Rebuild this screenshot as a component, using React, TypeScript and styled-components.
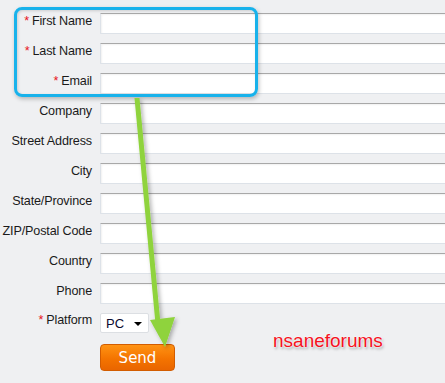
import React from "react";
import styled, { createGlobalStyle } from "styled-components";

const Global = createGlobalStyle`
  html, body { margin: 0; padding: 0; background: #eff0f2; overflow: hidden; }
  body { font-family: "Liberation Sans", Arial, sans-serif; }
`;

const Page = styled.div`
  position: relative;
  width: 445px;
  height: 383px;
  overflow: hidden;
  padding-top: 13px;
  box-sizing: border-box;
`;

const Form = styled.form`
  display: grid;
  grid-template-columns: 92px 360px;
  column-gap: 8px;
  row-gap: 9px;
  align-items: center;
`;

const Label = styled.label`
  text-align: right;
  font-size: 12.6px;
  line-height: 15px;
  padding-bottom: 5px;
  color: #1a1a1a;
  white-space: nowrap;
  letter-spacing: -0.15px;
`;

const Star = styled.span`
  color: #e8141c;
  margin-right: 3px;
`;

const Input = styled.input`
  box-sizing: border-box;
  height: 21px;
  width: 360px;
  margin: 0;
  background: #fff;
  border: 1px solid #dde2e8;
  border-top-color: #a8a8a8;
  border-radius: 1px;
  box-shadow: inset 1px 1px 2px rgba(0, 0, 0, 0.06);
  outline: none;
`;

const SelectBox = styled.div`
  box-sizing: border-box;
  width: 49px;
  height: 20px;
  background: #fff;
  border: 1px solid #dcdfe3;
  border-radius: 2px;
  display: flex;
  align-items: center;
  justify-content: space-between;
  padding: 1px 6px 0 5px;
  font-size: 13px;
  color: #0a0a30;
`;

const Caret = styled.span`
  width: 0;
  height: 0;
  border-left: 4px solid transparent;
  border-right: 4px solid transparent;
  border-top: 4px solid #000;
`;

const ButtonRow = styled.div`
  grid-column: 2;
  margin-top: 2px;
`;

const SendButton = styled.button`
  box-sizing: border-box;
  width: 75px;
  height: 27px;
  border: 1px solid #d25c00;
  border-radius: 4px;
  background: linear-gradient(#ff9313, #f47400 55%, #e96500);
  color: #fff;
  font-family: "DejaVu Sans", Verdana, sans-serif;
  font-size: 15px;
  padding: 0;
  cursor: pointer;
`;

const Highlight = styled.div`
  position: absolute;
  left: 14px;
  top: 7px;
  width: 244px;
  height: 90px;
  box-sizing: border-box;
  border: 3.5px solid #18b2eb;
  border-radius: 8px;
  box-shadow: 1px 2px 4px rgba(0, 0, 0, 0.25), inset 1px 1px 3px rgba(0, 0, 0, 0.15);
  pointer-events: none;
`;

const Watermark = styled.div`
  position: absolute;
  left: 273px;
  top: 330px;
  font-size: 19px;
  color: #f5121e;
  text-shadow: 0 0 2px #fff, 0 0 2px #fff, 1px 2px 3px rgba(0, 0, 0, 0.35);
`;

const ArrowSvg = styled.svg`
  position: absolute;
  left: 0;
  top: 0;
  pointer-events: none;
`;

const fields: { label: string; required?: boolean }[] = [
  { label: "First Name", required: true },
  { label: "Last Name", required: true },
  { label: "Email", required: true },
  { label: "Company" },
  { label: "Street Address" },
  { label: "City" },
  { label: "State/Province" },
  { label: "ZIP/Postal Code" },
  { label: "Country" },
  { label: "Phone" },
];

export default function App() {
  return (
    <Page>
      <Global />
      <Form onSubmit={(e) => e.preventDefault()}>
        {fields.map((f) => (
          <React.Fragment key={f.label}>
            <Label>
              {f.required && <Star>*</Star>}
              {f.label}
            </Label>
            <Input type="text" />
          </React.Fragment>
        ))}
        <Label>
          <Star>*</Star>Platform
        </Label>
        <SelectBox>
          PC <Caret />
        </SelectBox>
        <ButtonRow>
          <SendButton type="button">Send</SendButton>
        </ButtonRow>
      </Form>
      <Highlight />
      <ArrowSvg width="445" height="383" viewBox="0 0 445 383">
        <defs>
          <filter id="sh" x="-50%" y="-10%" width="200%" height="120%">
            <feDropShadow dx="2" dy="2" stdDeviation="2" floodColor="#000" floodOpacity="0.3" />
          </filter>
        </defs>
        <g filter="url(#sh)" fill="#8fd33c">
          <polygon points="134.5,98 139.5,98 160.5,324 155.5,324" />
          <polygon points="150,320 175,317 165,347" />
        </g>
      </ArrowSvg>
      <Watermark>nsaneforums</Watermark>
    </Page>
  );
}
